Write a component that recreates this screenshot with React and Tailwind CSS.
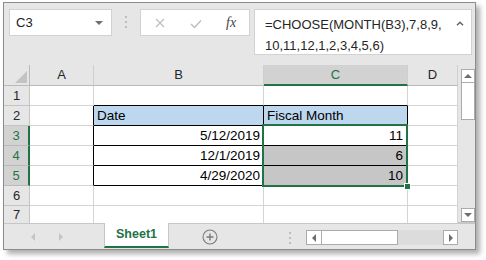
import React from 'react';

const rows = [
  { n: 1, b: '', c: '' },
  { n: 2, b: 'Date', c: 'Fiscal Month', head: true },
  { n: 3, b: '5/12/2019', c: '11', sel: true, active: true },
  { n: 4, b: '12/1/2019', c: '6', sel: true },
  { n: 5, b: '4/29/2020', c: '10', sel: true },
  { n: 6, b: '', c: '' },
  { n: 7, b: '', c: '', last: true },
];

const Tri = ({ dir, color = '#777', className = '' }) => {
  const pts = {
    up: '0,4 4,0 8,4',
    down: '0,0 8,0 4,4',
    left: '4,0 4,8 0,4',
    right: '0,0 0,8 4,4',
  }[dir];
  const vb = dir === 'up' || dir === 'down' ? '0 0 8 4' : '0 0 4 8';
  const size = dir === 'up' || dir === 'down' ? 'w-[8px] h-[4px]' : 'w-[4px] h-[8px]';
  return (
    <svg viewBox={vb} className={`${size} ${className}`}>
      <polygon points={pts} fill={color} />
    </svg>
  );
};

const Dots = () => (
  <div className="flex flex-col gap-[3px]">
    <div className="w-[2px] h-[2px] bg-[#bcbcbc]" />
    <div className="w-[2px] h-[2px] bg-[#bcbcbc]" />
    <div className="w-[2px] h-[2px] bg-[#bcbcbc]" />
  </div>
);

const GridRow = ({ r }) => {
  const h = r.last ? 'h-[17px]' : 'h-[20px]';
  const bottom = r.last ? '' : 'border-b';
  const inTable = r.n >= 2 && r.n <= 5;
  const topOfTable = r.n === 1;
  return (
    <div className={`flex ${h}`}>
      <div
        className={`w-[26px] shrink-0 flex items-center justify-center text-[13px] ${bottom} ${
          r.sel
            ? 'bg-[#d2d2d2] text-[#217346] border-r-2 border-r-[#217346] border-b-[#bababa]'
            : 'bg-[#e6e6e6] text-[#262626] border-r border-[#c4c4c4]'
        }`}
      >
        {r.n}
      </div>
      <div
        className={`w-[64px] shrink-0 bg-white ${bottom} border-b-[#d4d4d4] border-r ${
          inTable ? 'border-r-black' : 'border-r-[#d4d4d4]'
        }`}
      />
      <div
        className={`w-[170px] shrink-0 px-[3px] leading-[19px] text-[13.5px] text-black border-r ${bottom} ${
          inTable ? 'border-r-black border-b-black' : topOfTable ? 'border-r-[#d4d4d4] border-b-black' : 'border-r-[#d4d4d4] border-b-[#d4d4d4]'
        } ${r.head ? 'bg-[#bdd7ee] text-left' : 'bg-white text-right'}`}
      >
        {r.b}
      </div>
      <div
        className={`w-[144px] shrink-0 px-[4px] leading-[19px] text-[13.5px] text-black border-r ${bottom} ${
          inTable ? 'border-r-black border-b-black' : topOfTable ? 'border-r-[#d4d4d4] border-b-black' : 'border-r-[#d4d4d4] border-b-[#d4d4d4]'
        } ${r.head ? 'bg-[#bdd7ee] text-left pl-[3px]' : r.sel && !r.active ? 'bg-[#c6c6c6] text-right' : 'bg-white text-right'}`}
      >
        {r.c}
      </div>
      <div className={`w-[50px] shrink-0 bg-white border-r border-[#d4d4d4] ${bottom}`} />
    </div>
  );
};

export default function App() {
  return (
    <div className="w-[486px] h-[260px] bg-white font-['Liberation_Sans',Arial,sans-serif]">
      <div className="ml-[3px] mt-[2px] w-[473px] h-[248px] border border-[#8c8c8c] bg-[#e6e6e6] shadow-[4px_4px_5px_rgba(0,0,0,0.32)] flex flex-col">
        {/* formula bar */}
        <div className="h-[62px] shrink-0 flex items-start pt-[6px] pl-[5px]">
          <div className="w-[103px] h-[27px] bg-white border border-[#d2d2d2] flex items-center justify-between pl-[6px] pr-[8px]">
            <span className="text-[13px] text-[#222]">C3</span>
            <Tri dir="down" color="#6e6e6e" className="w-[7px] h-[4px]" />
          </div>
          <div className="ml-[13px] mt-[7px]">
            <Dots />
          </div>
          <div className="ml-[13px] w-[110px] h-[27px] bg-white border border-[#d2d2d2] flex items-center">
            <svg viewBox="0 0 10 10" className="ml-[14px] w-[10px] h-[10px]">
              <path d="M1 1 L9 9 M9 1 L1 9" stroke="#bdbdbd" strokeWidth="1.2" />
            </svg>
            <svg viewBox="0 0 12 10" className="ml-[25px] w-[12px] h-[10px] mt-[2px]">
              <path d="M1 5 L4.5 8.5 L11 1.5" stroke="#bdbdbd" strokeWidth="1.4" fill="none" />
            </svg>
            <span className="ml-[24px] text-[14px] italic text-[#444] font-['Liberation_Serif',serif]">fx</span>
          </div>
          <div className="ml-[4px] w-[218px] h-[46px] bg-white border border-[#d2d2d2] flex justify-between pl-[10px] pr-[7px] pt-[4px] text-[13px] leading-[21px] text-[#262626]">
            <div>
              <div>=CHOOSE(MONTH(B3),7,8,9,</div>
              <div>10,11,12,1,2,3,4,5,6)</div>
            </div>
            <svg viewBox="0 0 8 5" className="w-[8px] h-[5px] mt-[7px]">
              <path d="M1 4.2 L4 1.2 L7 4.2" stroke="#666" strokeWidth="1.5" fill="none" />
            </svg>
          </div>
        </div>

        {/* grid */}
        <div className="h-[158px] shrink-0 flex">
          <div className="relative w-[454px] shrink-0 flex flex-col">
            <div className="flex h-[21px] text-[13px] text-[#262626]">
              <div className="w-[26px] shrink-0 bg-[#e6e6e6] border-r border-b border-[#bababa] flex items-end justify-end pr-[2px] pb-[2px]">
                <svg viewBox="0 0 12 12" className="w-[12px] h-[12px]">
                  <polygon points="12,0 12,12 0,12" fill="#c3c3c3" />
                </svg>
              </div>
              <div className="w-[64px] shrink-0 bg-[#e6e6e6] border-r border-b border-r-[#cfcfcf] border-b-[#bababa] flex items-center justify-center">A</div>
              <div className="w-[170px] shrink-0 bg-[#e6e6e6] border-r border-b border-r-[#cfcfcf] border-b-[#bababa] flex items-center justify-center">B</div>
              <div className="w-[144px] shrink-0 bg-[#d2d2d2] border-r border-r-[#cfcfcf] border-b-2 border-b-[#217346] flex items-center justify-center text-[#217346]">C</div>
              <div className="w-[50px] shrink-0 bg-[#e6e6e6] border-r border-b border-r-[#cfcfcf] border-b-[#bababa] flex items-center justify-center">D</div>
            </div>
            {rows.map((r) => (
              <GridRow key={r.n} r={r} />
            ))}
            {/* selection C3:C5 */}
            <div className="absolute left-[258px] top-[59px] w-[146px] h-[63px] border-2 border-[#217346] pointer-events-none" />
            <div className="absolute left-[400px] top-[118px] w-[7px] h-[7px] bg-[#217346] border border-white pointer-events-none" />
          </div>
          {/* vertical scrollbar */}
          <div className="w-[17px] shrink-0 flex flex-col pl-[3px] pt-[4px] border-b border-[#c6c6c6]">
            <div className="w-[14px] h-[14px] bg-white border border-[#ababab] flex items-center justify-center">
              <Tri dir="up" color="#6e6e6e" className="w-[7px] h-[4px]" />
            </div>
            <div className="w-[14px] h-[37px] bg-white border border-t-0 border-[#ababab]" />
            <div className="flex-1" />
            <div className="w-[14px] h-[14px] bg-white border border-[#ababab] flex items-center justify-center">
              <Tri dir="down" color="#6e6e6e" className="w-[7px] h-[4px]" />
            </div>
          </div>
        </div>

        {/* tab bar */}
        <div className="flex-1 flex items-start">
          <div className="w-[100px] h-full border-t border-[#c6c6c6] flex items-center pl-[27px] gap-[24px]">
            <Tri dir="left" color="#c4c4c4" />
            <Tri dir="right" color="#c4c4c4" />
          </div>
          <div className="w-[65px] h-[25px] bg-white border-x border-[#c6c6c6] border-b-2 border-b-[#217346] flex items-center justify-center text-[12.5px] font-bold text-[#217346]">
            Sheet1
          </div>
          <div className="flex-1 h-full border-t border-[#c6c6c6] flex items-start">
            <svg viewBox="0 0 16 16" className="ml-[33px] mt-[5px] w-[16px] h-[16px]">
              <circle cx="8" cy="8" r="7" stroke="#7a7a7a" strokeWidth="1.1" fill="none" />
              <path d="M8 4.5 V11.5 M4.5 8 H11.5" stroke="#7a7a7a" strokeWidth="1.4" />
            </svg>
            <div className="ml-[71px] mt-[8px]">
              <Dots />
            </div>
            <div className="ml-[15px] mt-[6px] w-[152px] h-[15px] flex">
              <div className="w-[16px] h-[15px] bg-white border border-[#ababab] flex items-center justify-center">
                <Tri dir="left" color="#6e6e6e" />
              </div>
              <div className="w-[76px] h-[15px] bg-white border border-l-0 border-[#ababab]" />
              <div className="flex-1 h-[15px] bg-[#dcdcdc]" />
              <div className="w-[15px] h-[15px] bg-white border border-[#ababab] flex items-center justify-center">
                <Tri dir="right" color="#6e6e6e" />
              </div>
            </div>
          </div>
        </div>
      </div>
    </div>
  );
}
